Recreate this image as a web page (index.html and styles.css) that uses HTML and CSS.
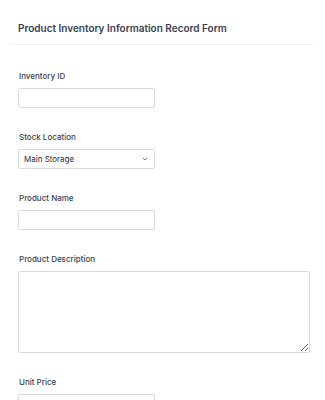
FILE: index.html
```html
<!DOCTYPE html>
<html lang="en">
<head>
  <meta charset="UTF-8">
  <title>Product Inventory Information Record Form</title>
  <link rel="stylesheet" href="styles.css">
</head>
<body>

<div class="page">

  <!--标题-->
  <div class="head">
    <h1>Product Inventory Information Record Form</h1>
  </div>

  <!--表单-->
  <form class="form">
    <div class="field">
      <label for="inv-id">Inventory ID</label>
      <input id="inv-id" type="text">
    </div>

    <div class="field">
      <label for="loc">Stock Location</label>
      <div class="select">
        <select id="loc">
          <option>Main Storage</option>
        </select>
        <svg class="caret" width="6" height="4" viewBox="0 0 6 4"><path d="M0.8 0.8 L3 3 L5.2 0.8" fill="none" stroke="#6b7280" stroke-width="0.9"/></svg>
      </div>
    </div>

    <div class="field">
      <label for="name">Product Name</label>
      <input id="name" type="text">
    </div>

    <div class="field">
      <label for="desc">Product Description</label>
      <textarea id="desc"></textarea>
    </div>

    <div class="field">
      <label for="price">Unit Price</label>
      <input id="price" type="text">
    </div>
  </form>
</div>

</body>
</html>
```

FILE: styles.css
```css
* {
  margin: 0;
  padding: 0;
  box-sizing: border-box;
}

body {
  font-family: Inter, "Noto Sans", sans-serif;
  color: #374151;
  background-color: #fff;
}

.head {
  margin: 0 11px;
  padding: 21px 7px 9px;
  border-bottom: 1px solid #f0f1f3;
}

.head h1 {
  font-size: 10px;
  font-weight: 600;
  line-height: 14px;
  color: #374151;
}

.form {
  padding: 26px 18px 0;
}

.field {
  margin-bottom: 24px;
}

.field label {
  display: block;
  font-size: 8px;
  font-weight: 500;
  line-height: 10px;
  color: #374151;
  margin: 0 0 7px 1px;
}

.field input,
.field select,
.field textarea {
  display: block;
  width: 137px;
  height: 20px;
  border: 1px solid #d9dbe0;
  border-radius: 2px;
  background-color: #fff;
  font-family: inherit;
  font-size: 8px;
  color: #1f2937;
  outline: none;
}

.select {
  position: relative;
  width: 137px;
}

.select select {
  appearance: none;
  -webkit-appearance: none;
  padding-left: 5px;
}

.caret {
  position: absolute;
  right: 7px;
  top: 8px;
}

.field textarea {
  width: 292px;
  height: 82px;
  resize: vertical;
}
```
